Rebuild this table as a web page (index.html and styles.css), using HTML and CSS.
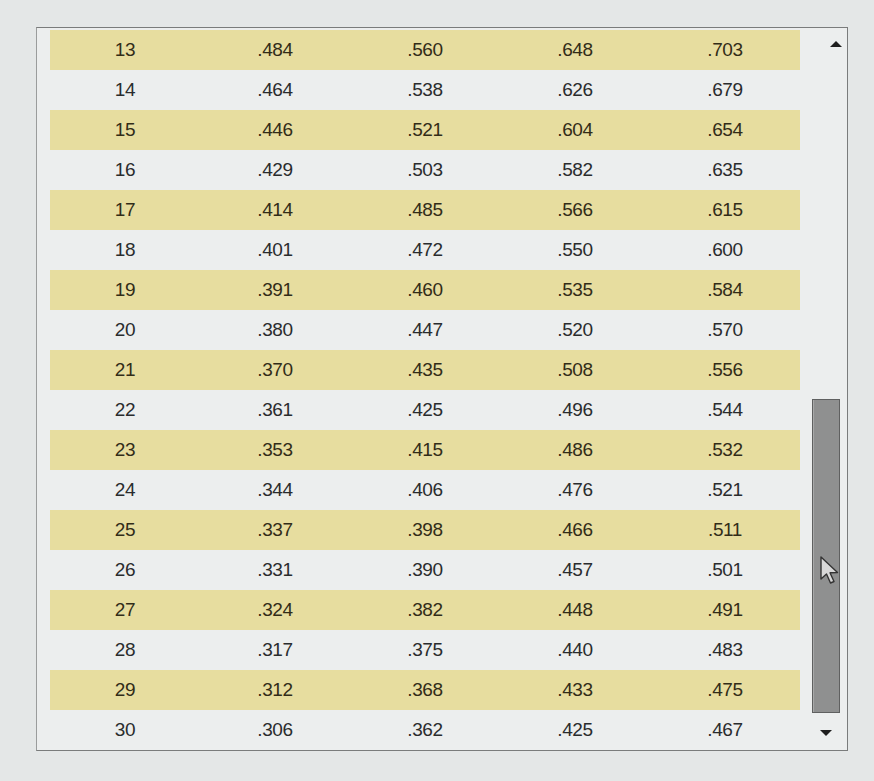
FILE: index.html
```html
<!DOCTYPE html>
<html lang="en">
<head>
<meta charset="utf-8">
<title>Table</title>
<link rel="stylesheet" href="styles.css">
</head>
<body>
<div class="panel">
  <div class="table">
    <div class="row band"><span>13</span><span>.484</span><span>.560</span><span>.648</span><span>.703</span></div>
    <div class="row"><span>14</span><span>.464</span><span>.538</span><span>.626</span><span>.679</span></div>
    <div class="row band"><span>15</span><span>.446</span><span>.521</span><span>.604</span><span>.654</span></div>
    <div class="row"><span>16</span><span>.429</span><span>.503</span><span>.582</span><span>.635</span></div>
    <div class="row band"><span>17</span><span>.414</span><span>.485</span><span>.566</span><span>.615</span></div>
    <div class="row"><span>18</span><span>.401</span><span>.472</span><span>.550</span><span>.600</span></div>
    <div class="row band"><span>19</span><span>.391</span><span>.460</span><span>.535</span><span>.584</span></div>
    <div class="row"><span>20</span><span>.380</span><span>.447</span><span>.520</span><span>.570</span></div>
    <div class="row band"><span>21</span><span>.370</span><span>.435</span><span>.508</span><span>.556</span></div>
    <div class="row"><span>22</span><span>.361</span><span>.425</span><span>.496</span><span>.544</span></div>
    <div class="row band"><span>23</span><span>.353</span><span>.415</span><span>.486</span><span>.532</span></div>
    <div class="row"><span>24</span><span>.344</span><span>.406</span><span>.476</span><span>.521</span></div>
    <div class="row band"><span>25</span><span>.337</span><span>.398</span><span>.466</span><span>.511</span></div>
    <div class="row"><span>26</span><span>.331</span><span>.390</span><span>.457</span><span>.501</span></div>
    <div class="row band"><span>27</span><span>.324</span><span>.382</span><span>.448</span><span>.491</span></div>
    <div class="row"><span>28</span><span>.317</span><span>.375</span><span>.440</span><span>.483</span></div>
    <div class="row band"><span>29</span><span>.312</span><span>.368</span><span>.433</span><span>.475</span></div>
    <div class="row"><span>30</span><span>.306</span><span>.362</span><span>.425</span><span>.467</span></div>
  </div>
  <div class="scrollbar">
    <div class="arrow up"></div>
    <div class="track"><div class="thumb"></div></div>
    <div class="arrow down"></div>
  </div>
  <svg class="cursor" width="22" height="32" viewBox="0 0 22 32">
    <path d="M2 2 L2 24 L7.5 19 L11.5 28 L15 26.5 L11 17.8 L18.5 17.5 Z" fill="#d8d8d8" stroke="#333" stroke-width="1.4" stroke-linejoin="round"/>
  </svg>
</div>
</body>
</html>
```

FILE: styles.css
```css
html, body {
  margin: 0;
  padding: 0;
}
body {
  background: #e4e7e7;
  font-family: "Liberation Sans", Arial, sans-serif;
  width: 874px;
  height: 781px;
  overflow: hidden;
}
.panel {
  position: relative;
  margin: 27px 0 0 36px;
  width: 810px;
  height: 722px;
  border: 1px solid #7a7c7c;
  border-left-color: #9a9c9c;
  background: #eceeee;
  display: flex;
  box-sizing: content-box;
}
.table {
  padding: 2px 0 0 13px;
  display: flex;
  flex-direction: column;
}
.row {
  display: grid;
  grid-template-columns: repeat(5, 150px);
  height: 40px;
  align-items: center;
  font-size: 19px;
  color: #2a2c2d;
  letter-spacing: -0.4px;
}
.row span {
  text-align: center;
}
.band {
  background: #e7dd9f;
  color: #322c18;
}
.scrollbar {
  margin-left: 11px;
  width: 36px;
  display: flex;
  flex-direction: column;
  align-items: center;
}
.arrow {
  width: 0;
  height: 0;
  border-left: 6px solid transparent;
  border-right: 6px solid transparent;
}
.arrow.up {
  border-bottom: 6px solid #1e1e1e;
  margin: 13px 0 0 14px;
}
.arrow.down {
  border-top: 6px solid #1e1e1e;
  margin: 0 6px 14px 0;
}
.track {
  flex: 1;
  width: 100%;
  display: flex;
  flex-direction: column;
}
.thumb {
  margin: 352px 0 17px 1px;
  width: 26px;
  flex: 1;
  background: #8f9090;
  border: 1px solid #5f6060;
  box-shadow: inset 1px 0 0 #a8a9a9;
}
.cursor {
  position: absolute;
  left: 782px;
  top: 527px;
}
```
